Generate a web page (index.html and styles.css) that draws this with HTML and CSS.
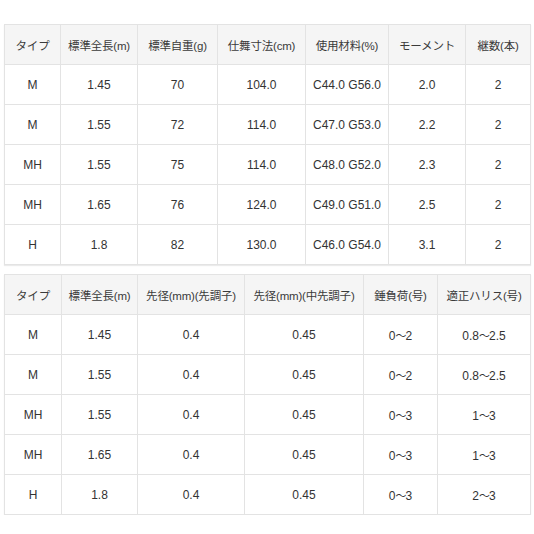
FILE: index.html
```html
<!DOCTYPE html>
<html lang="ja">
<head>
<meta charset="utf-8">
<link rel="stylesheet" href="styles.css">
</head>
<body>
<div class="page">
<table class="spec t1">
<colgroup><col style="width:56px"><col style="width:77px"><col style="width:80px"><col style="width:88px"><col style="width:83px"><col style="width:77px"><col style="width:65px"></colgroup>
<thead><tr><th>タイプ</th><th>標準全長(m)</th><th>標準自重(g)</th><th>仕舞寸法(cm)</th><th>使用材料(%)</th><th>モーメント</th><th>継数(本)</th></tr></thead>
<tbody>
<tr><td>M</td><td>1.45</td><td>70</td><td>104.0</td><td>C44.0 G56.0</td><td>2.0</td><td>2</td></tr>
<tr><td>M</td><td>1.55</td><td>72</td><td>114.0</td><td>C47.0 G53.0</td><td>2.2</td><td>2</td></tr>
<tr><td>MH</td><td>1.55</td><td>75</td><td>114.0</td><td>C48.0 G52.0</td><td>2.3</td><td>2</td></tr>
<tr><td>MH</td><td>1.65</td><td>76</td><td>124.0</td><td>C49.0 G51.0</td><td>2.5</td><td>2</td></tr>
<tr><td>H</td><td>1.8</td><td>82</td><td>130.0</td><td>C46.0 G54.0</td><td>3.1</td><td>2</td></tr>
</tbody>
</table>
<table class="spec t2">
<colgroup><col style="width:57px"><col style="width:76px"><col style="width:107px"><col style="width:119px"><col style="width:74px"><col style="width:93px"></colgroup>
<thead><tr><th>タイプ</th><th>標準全長(m)</th><th>先径(mm)(先調子)</th><th>先径(mm)(中先調子)</th><th>錘負荷(号)</th><th>適正ハリス(号)</th></tr></thead>
<tbody>
<tr><td>M</td><td>1.45</td><td>0.4</td><td>0.45</td><td>0<span class="w">〜</span>2</td><td>0.8<span class="w">〜</span>2.5</td></tr>
<tr><td>M</td><td>1.55</td><td>0.4</td><td>0.45</td><td>0<span class="w">〜</span>2</td><td>0.8<span class="w">〜</span>2.5</td></tr>
<tr><td>MH</td><td>1.55</td><td>0.4</td><td>0.45</td><td>0<span class="w">〜</span>3</td><td>1<span class="w">〜</span>3</td></tr>
<tr><td>MH</td><td>1.65</td><td>0.4</td><td>0.45</td><td>0<span class="w">〜</span>3</td><td>1<span class="w">〜</span>3</td></tr>
<tr><td>H</td><td>1.8</td><td>0.4</td><td>0.45</td><td>0<span class="w">〜</span>3</td><td>2<span class="w">〜</span>3</td></tr>
</tbody>
</table>
</div>
</body>
</html>
```
FILE: styles.css
```css
html, body {
  margin: 0;
  padding: 0;
  background: #fff;
}
.page {
  padding: 24px 0 0 4px;
  display: flex;
  flex-direction: column;
  gap: 9px;
  font-family: "Liberation Sans", "Noto Sans CJK JP", sans-serif;
  font-size: 12px;
  color: #333;
}
.spec {
  border-collapse: collapse;
  table-layout: fixed;
  width: 526px;
  box-shadow: 0 1px 1px rgba(0,0,0,0.08);
}
.spec th, .spec td {
  border: 1px solid #e3e3e3;
  height: 39px;
  padding: 0;
  text-align: center;
  vertical-align: middle;
  white-space: nowrap;
}
.spec th {
  background: #f5f5f5;
  font-weight: normal;
  font-size: 11.5px;
  letter-spacing: -0.2px;
  color: #3a3a3a;
}
.spec td {
  background: #fff;
}
.w {
  font-size: 11px;
  letter-spacing: -1px;
}
```
